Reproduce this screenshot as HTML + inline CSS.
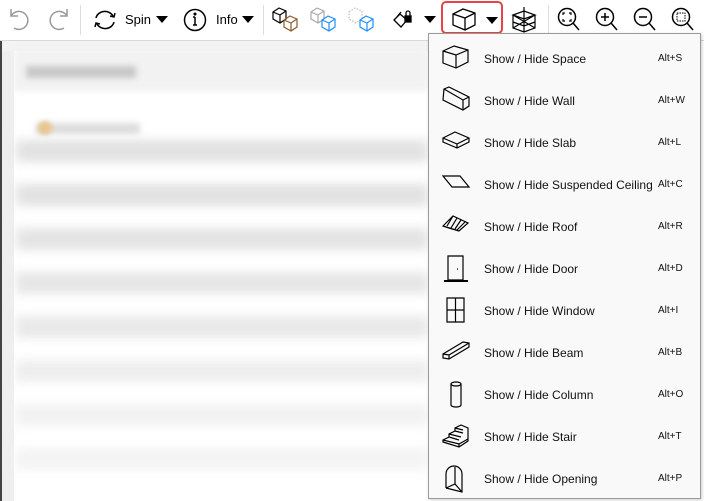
<!DOCTYPE html>
<html><head><meta charset="utf-8">
<style>
body{margin:0;width:704px;height:501px;overflow:hidden;background:#fff;font-family:"Liberation Sans",Arial,sans-serif;position:relative}
.tb{position:absolute;left:0;top:0;width:704px;height:40px;background:#fff;border-bottom:1px solid #d8d8d8}
.tb svg{position:absolute}
.sep{position:absolute;top:5px;width:1px;height:30px;background:#ddd}
.lbl{position:absolute;top:12px;font-size:13px;color:#000}
.tri{position:absolute;top:16px;width:0;height:0;border-left:6px solid transparent;border-right:6px solid transparent;border-top:7px solid #000}
.left{position:absolute;left:0;top:41px;width:428px;height:460px;background:#fff;border-left:2px solid #444;box-sizing:border-box}
.stripe{position:absolute;left:14px;right:0;height:22px;background:#e2e2e2;filter:blur(5px)}
.menu{position:absolute;left:428px;top:33px;width:273px;height:466px;background:#f9f9f9;border:1px solid #9a9a9a;box-sizing:border-box;box-shadow:1px 1px 3px rgba(0,0,0,.2)}
.it{position:absolute;left:0;width:272px;height:42px}
.it svg{position:absolute;left:12px;top:7px}
.it .t{position:absolute;left:55px;top:15px;font-size:12px;color:#111;white-space:nowrap}
.it .k{position:absolute;left:229px;top:16px;font-size:10px;color:#111}
</style></head><body>
<div class="tb">
 <svg style="left:6px;top:6px" width="28" height="28" viewBox="0 0 28 28" fill="none" stroke="#999" stroke-width="1.5"><path d="M5 10 A9 9 0 1 1 8 22"/><path d="M5 3 V10 H12"/></svg>
 <svg style="left:44px;top:6px" width="28" height="28" viewBox="0 0 28 28" fill="none" stroke="#999" stroke-width="1.5"><path d="M23 10 A9 9 0 1 0 20 22"/><path d="M23 3 V10 H16"/></svg>
 <div class="sep" style="left:80px"></div>
 <svg style="left:92px;top:8px" width="26" height="24" viewBox="0 0 26 24" fill="none" stroke="#000" stroke-width="1.5"><path d="M4 10 A9 8 0 0 1 21 8"/><path d="M22 14 A9 8 0 0 1 5 16"/><path d="M18 8 L22 9 L23 5"/><path d="M8 16 L4 15 L3 19"/></svg>
 <div class="lbl" style="left:125px">Spin</div><div class="tri" style="left:156px"></div>
 <svg style="left:183px;top:8px" width="24" height="24" viewBox="0 0 24 24" fill="none" stroke="#000" stroke-width="1.5"><circle cx="12" cy="12" r="10.5"/><path d="M12 9 V17 M10 17 H14 M10 9 H12"/><circle cx="12" cy="6" r=".8" fill="#000"/></svg>
 <div class="lbl" style="left:216px">Info</div><div class="tri" style="left:242px"></div>
 <div class="sep" style="left:263px"></div>
 <svg style="left:271px;top:6px" width="30" height="28" viewBox="0 0 30 28" fill="none" stroke-width="1.2"><path stroke="#000" d="M2 6 L8 2 L15 5 L15 13 L9 17 L2 13 Z M2 6 L9 9 L15 5 M9 9 V17"/><path stroke="#8b5a2b" d="M13 14 L19 10 L26 13 L26 21 L20 25 L13 21 Z M13 14 L20 17 L26 13 M20 17 V25"/></svg>
 <svg style="left:309px;top:6px" width="30" height="28" viewBox="0 0 30 28" fill="none" stroke-width="1.2"><path stroke="#aaa" d="M2 6 L8 2 L15 5 L15 13 L9 17 L2 13 Z M2 6 L9 9 L15 5 M9 9 V17"/><path stroke="#1e90ff" d="M13 14 L19 10 L26 13 L26 21 L20 25 L13 21 Z M13 14 L20 17 L26 13 M20 17 V25"/></svg>
 <svg style="left:347px;top:6px" width="30" height="28" viewBox="0 0 30 28" fill="none" stroke-width="1.2"><path stroke="#bbb" stroke-dasharray="1.5 1.5" d="M2 6 L8 2 L15 5 L15 13 L9 17 L2 13 Z"/><path stroke="#1e90ff" d="M13 14 L19 10 L26 13 L26 21 L20 25 L13 21 Z M13 14 L20 17 L26 13 M20 17 V25"/></svg>
 <svg style="left:392px;top:8px" width="22" height="24" viewBox="0 0 22 24" fill="none" stroke="#000" stroke-width="1.3"><path d="M2 12 L8 6 L15 12 L9 19 Z M4 10 L9 4"/><rect x="13" y="8" width="6" height="6" fill="#000"/><path d="M14 8 V5 A2 2 0 0 1 18 5 V8"/></svg>
 <div class="tri" style="left:424px"></div>
 <div style="position:absolute;left:441px;top:1px;width:62px;height:33px;border:2px solid #e64545;border-radius:5px;box-sizing:border-box"></div>
 <svg style="left:451px;top:6px" width="26" height="26" viewBox="0 0 26 26" fill="none" stroke="#000" stroke-width="1.3"><path d="M2 8 L12 3 L24 7 L24 19 L14 24 L2 19 Z M2 8 L14 12 L24 7 M14 12 V24"/></svg>
 <div class="tri" style="left:486px;top:17px"></div>
 <svg style="left:510px;top:6px" width="28" height="28" viewBox="0 0 28 28" fill="none" stroke="#000" stroke-width="1.2"><path d="M14 1 V26 M3 9 L14 5 L25 9 L14 13 Z M3 9 V22 L14 26 L25 22 V9 M3 9 L25 22 M25 9 L3 22 M3 16 L14 20 L25 16"/></svg>
 <div class="sep" style="left:548px"></div>
 <svg style="left:557px;top:7px" width="24" height="26" viewBox="0 0 24 26" fill="none" stroke="#000" stroke-width="1.5"><circle cx="10" cy="10" r="8.5"/><path d="M16 16 L22 23"/><path stroke-width="1.2" d="M6 8 V6 H8 M12 6 H14 V8 M14 12 V14 H12 M8 14 H6 V12"/></svg>
 <svg style="left:595px;top:7px" width="24" height="26" viewBox="0 0 24 26" fill="none" stroke="#000" stroke-width="1.5"><circle cx="10" cy="10" r="8.5"/><path d="M16 16 L22 23 M6 10 H14 M10 6 V14"/></svg>
 <svg style="left:633px;top:7px" width="24" height="26" viewBox="0 0 24 26" fill="none" stroke="#000" stroke-width="1.5"><circle cx="10" cy="10" r="8.5"/><path d="M16 16 L22 23 M6 10 H14"/></svg>
 <svg style="left:671px;top:7px" width="24" height="26" viewBox="0 0 24 26" fill="none" stroke="#000" stroke-width="1.5"><circle cx="10" cy="10" r="8.5"/><path d="M16 16 L22 23"/><rect x="6" y="6" width="8" height="8" stroke-width="1" stroke-dasharray="1.5 1"/></svg>
</div>
<div class="left">
 <div style="position:absolute;left:0;top:0;width:12px;bottom:0;background:#efefef"></div>
 <div style="position:absolute;left:0;right:0;top:0;height:10px;background:#f3f3f3"></div>
 <div style="position:absolute;left:12px;right:0;top:8px;height:42px;background:#f2f2f2;filter:blur(3px)"></div>
 <div style="position:absolute;left:24px;top:25px;width:110px;height:12px;background:#c8c8c8;filter:blur(3px)"></div>
 <div style="position:absolute;left:34px;top:82px;width:104px;height:11px;background:#ddd;filter:blur(3px)"></div>
 <div style="position:absolute;left:36px;top:80px;width:14px;height:14px;border-radius:50%;background:#e8c890;filter:blur(2px)"></div>
 <div class="stripe" style="top:99px"></div>
 <div class="stripe" style="top:143px"></div>
 <div class="stripe" style="top:187px;background:#e4e4e4"></div>
 <div class="stripe" style="top:231px;background:#e6e6e6"></div>
 <div class="stripe" style="top:275px;background:#e9e9e9"></div>
 <div class="stripe" style="top:319px;background:#eeeeee"></div>
 <div class="stripe" style="top:363px;background:#f2f2f2"></div>
 <div class="stripe" style="top:407px;background:#f4f4f4"></div>
</div>
<div class="menu">
 <div class="it" style="top:3px"><svg width="30" height="28" viewBox="0 0 30 28" fill="none" stroke="#000" stroke-width="1.2"><path d="M2 7 L13 2 L27 6 L27 18 L15 24 L2 19 Z M2 7 L15 11 L27 6 M15 11 V24"/></svg><span class="t">Show / Hide Space</span><span class="k">Alt+S</span></div>
 <div class="it" style="top:45px"><svg width="30" height="28" viewBox="0 0 30 28" fill="none" stroke="#000" stroke-width="1.2"><path d="M3 3 L8 1 L28 11 L28 20 L22 24 L2 14 Z M3 3 L22 14 L28 11 M22 14 V24 M3 3 L2 14"/></svg><span class="t">Show / Hide Wall</span><span class="k">Alt+W</span></div>
 <div class="it" style="top:87px"><svg width="30" height="28" viewBox="0 0 30 28" fill="none" stroke="#000" stroke-width="1.2"><path d="M2 10 L14 4 L28 10 L28 14 L16 20 L2 14 Z M2 10 L16 16 L28 10 M16 16 V20"/></svg><span class="t">Show / Hide Slab</span><span class="k">Alt+L</span></div>
 <div class="it" style="top:129px"><svg width="30" height="28" viewBox="0 0 30 28" fill="none" stroke="#000" stroke-width="1.2"><path d="M2 6 L19 6 L28 17 L11 17 Z"/></svg><span class="t">Show / Hide Suspended Ceiling</span><span class="k">Alt+C</span></div>
 <div class="it" style="top:171px"><svg width="30" height="28" viewBox="0 0 30 28" fill="none" stroke="#000" stroke-width="1.2"><path d="M2 14 L12 4 L27 11 L18 19 Z M12 4 L6 14 M16 6 L10 16 M20 8 L14 17 M24 10 L16 18 M2 14 L8 16 L18 19"/></svg><span class="t">Show / Hide Roof</span><span class="k">Alt+R</span></div>
 <div class="it" style="top:213px"><svg width="30" height="30" viewBox="0 0 30 30" fill="none" stroke="#000" stroke-width="1.2"><path d="M7 2 H22 V26 H7 Z M16 15 H17"/><path d="M3 27 H27" stroke-width="2"/></svg><span class="t">Show / Hide Door</span><span class="k">Alt+D</span></div>
 <div class="it" style="top:255px"><svg width="30" height="28" viewBox="0 0 30 28" fill="none" stroke="#000" stroke-width="1.2"><path d="M6 2 H23 V26 H6 Z M14.5 2 V26 M6 14 H23"/></svg><span class="t">Show / Hide Window</span><span class="k">Alt+I</span></div>
 <div class="it" style="top:297px"><svg width="30" height="28" viewBox="0 0 30 28" fill="none" stroke="#000" stroke-width="1.2"><path d="M2 16 L22 4 L28 5 L28 9 L8 21 L2 20 Z M2 16 L8 17 L28 5 M8 17 V21"/></svg><span class="t">Show / Hide Beam</span><span class="k">Alt+B</span></div>
 <div class="it" style="top:339px"><svg width="30" height="30" viewBox="0 0 30 30" fill="none" stroke="#000" stroke-width="1.2"><ellipse cx="15" cy="4" rx="5" ry="2"/><path d="M10 4 V25 A5 2 0 0 0 20 25 V4"/></svg><span class="t">Show / Hide Column</span><span class="k">Alt+O</span></div>
 <div class="it" style="top:381px"><svg width="30" height="28" viewBox="0 0 30 28" fill="none" stroke="#000" stroke-width="1.2"><path d="M2 18 L8 15 L8 12 L14 9 L14 6 L20 3 L27 6 L27 19 L18 25 L2 20 Z M2 18 L18 22 L27 17 M18 22 V25 M8 15 L18 18 M8 12 L20 15 M14 9 L22 11 M14 6 L22 8 M20 3 L27 6"/></svg><span class="t">Show / Hide Stair</span><span class="k">Alt+T</span></div>
 <div class="it" style="top:423px"><svg width="30" height="30" viewBox="0 0 30 30" fill="none" stroke="#000" stroke-width="1.2"><path d="M5 24 V10 A8 8 0 0 1 21 10 V28 L5 24 M14 3 V20 M5 24 L14 20 L21 28"/></svg><span class="t">Show / Hide Opening</span><span class="k">Alt+P</span></div>
</div>
</body></html>
